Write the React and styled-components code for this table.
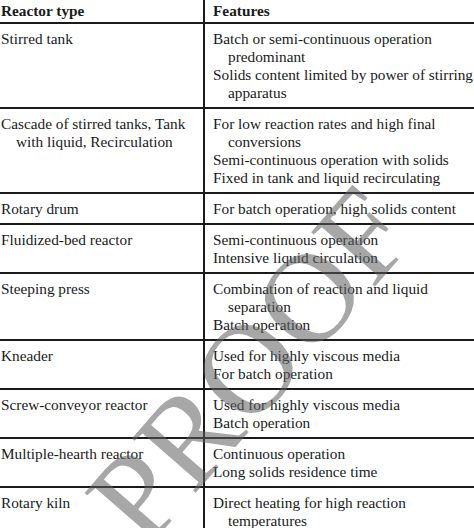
import React from "react";
import styled, { createGlobalStyle } from "styled-components";

const Global = createGlobalStyle`
  html, body { margin: 0; padding: 0; background: #ffffff; }
  body { overflow: hidden; width: 474px; height: 528px; }
`;

const Page = styled.div`
  position: relative;
  width: 474px;
  height: 528px;
  overflow: hidden;
  background: #fff;
  font-family: "Liberation Serif", "DejaVu Serif", serif;
  color: #1a1a1a;
`;

const Table = styled.table`
  width: 480px;
  border-collapse: collapse;
  table-layout: fixed;
  font-size: 15.3px;
  line-height: 18px;
`;

const Col = styled.col`
  width: ${(p) => p.$w}px;
`;

const HeadCell = styled.th`
  text-align: left;
  font-weight: bold;
  padding: 2px 0 2px ${(p) => (p.$right ? 8 : 1)}px;
  border-bottom: 2.5px solid #1a1a1a;
  border-left: ${(p) => (p.$right ? "2px solid #1a1a1a" : "none")};
  white-space: nowrap;
`;

const Cell = styled.td`
  vertical-align: top;
  padding: 6px 0 5px ${(p) => (p.$right ? 8 : 1)}px;
  border-top: 2px solid #1a1a1a;
  border-left: ${(p) => (p.$right ? "2px solid #1a1a1a" : "none")};
`;

const Line = styled.div`
  white-space: nowrap;
  padding-left: ${(p) => (p.$cont ? 15 : 0)}px;
`;

const Watermark = styled.div`
  position: absolute;
  left: ${(p) => p.$x}px;
  top: ${(p) => p.$y}px;
  transform: translate(-50%, -50%) rotate(-49deg);
  font-family: "Liberation Serif", "DejaVu Serif", serif;
  font-size: 128px;
  line-height: 1;
  color: rgba(95, 95, 95, 0.55);
  white-space: nowrap;
  pointer-events: none;
  letter-spacing: 1px;
`;

const rows = [
  {
    type: ["Stirred tank"],
    features: [
      ["Batch or semi-continuous operation", "predominant"],
      ["Solids content limited by power of stirring", "apparatus"],
    ],
  },
  {
    type: ["Cascade of stirred tanks, Tank", "with liquid, Recirculation"],
    features: [
      ["For low reaction rates and high final", "conversions"],
      ["Semi-continuous operation with solids"],
      ["Fixed in tank and liquid recirculating"],
    ],
  },
  { type: ["Rotary drum"], features: [["For batch operation, high solids content"]] },
  {
    type: ["Fluidized-bed reactor"],
    features: [["Semi-continuous operation"], ["Intensive liquid circulation"]],
  },
  {
    type: ["Steeping press"],
    features: [["Combination of reaction and liquid", "separation"], ["Batch operation"]],
  },
  {
    type: ["Kneader"],
    features: [["Used for highly viscous media"], ["For batch operation"]],
  },
  {
    type: ["Screw-conveyor reactor"],
    features: [["Used for highly viscous media"], ["Batch operation"]],
  },
  {
    type: ["Multiple-hearth reactor"],
    features: [["Continuous operation"], ["Long solids residence time"]],
  },
  {
    type: ["Rotary kiln"],
    features: [["Direct heating for high reaction", "temperatures"]],
  },
];

function Lines({ lines }) {
  return lines.map((t, i) => (
    <Line key={i} $cont={i > 0}>
      {t}
    </Line>
  ));
}

export default function App() {
  return (
    <Page>
      <Global />
      <Table>
        <colgroup>
          <Col $w={204} />
          <Col $w={276} />
        </colgroup>
        <thead>
          <tr>
            <HeadCell>Reactor type</HeadCell>
            <HeadCell $right>Features</HeadCell>
          </tr>
        </thead>
        <tbody>
          {rows.map((r, i) => (
            <tr key={i}>
              <Cell>
                <Lines lines={r.type} />
              </Cell>
              <Cell $right>
                {r.features.map((f, j) => (
                  <Lines key={j} lines={f} />
                ))}
              </Cell>
            </tr>
          ))}
        </tbody>
      </Table>
      <Watermark $x={250} $y={365}>PROOF</Watermark>
    </Page>
  );
}
